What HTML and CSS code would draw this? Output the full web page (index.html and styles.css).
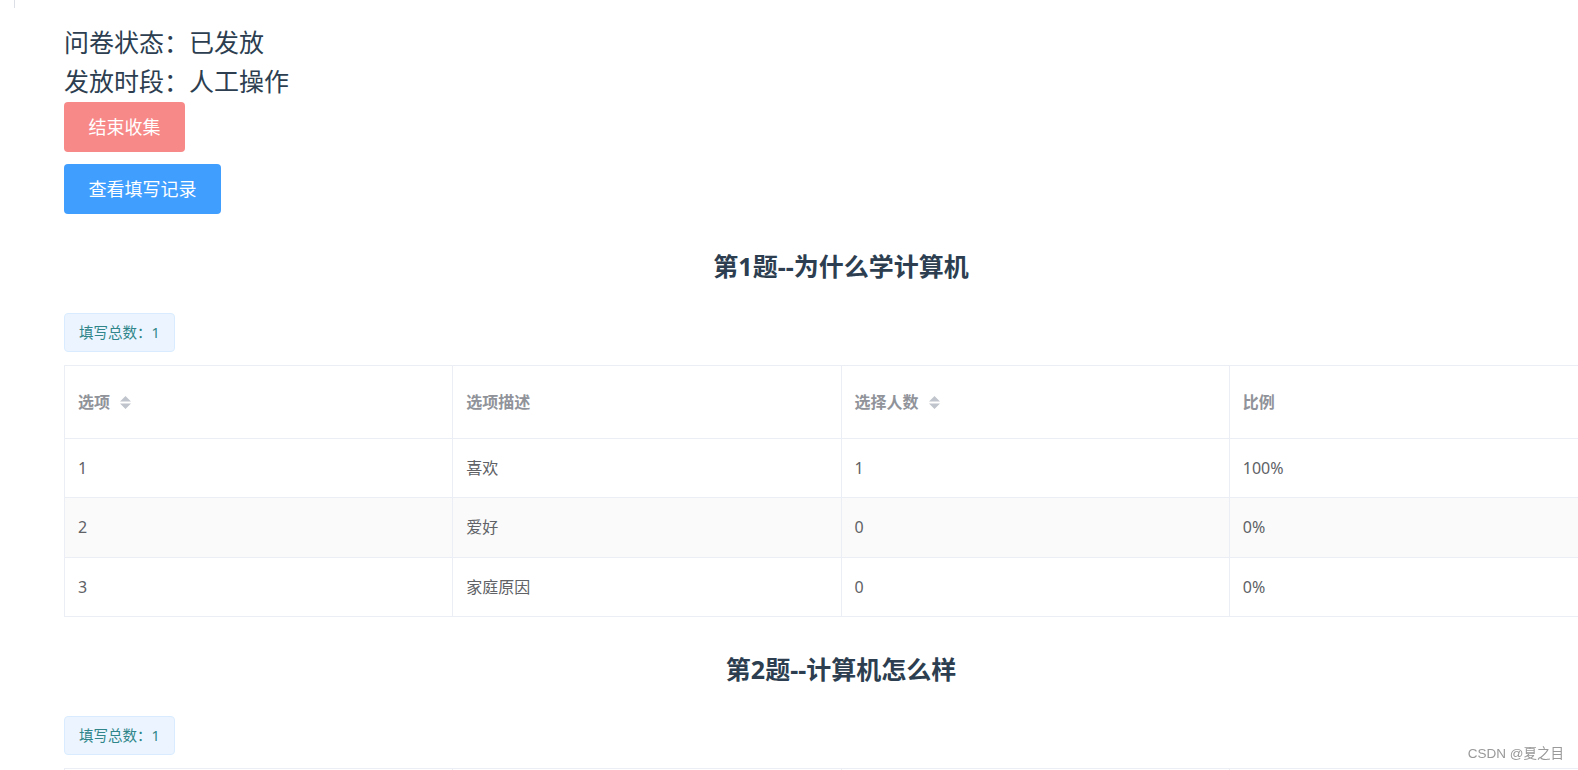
FILE: index.html
```html
<!DOCTYPE html>
<html lang="zh-CN">
<head>
<meta charset="utf-8">
<title>问卷统计</title>
<link rel="stylesheet" href="styles.css">
</head>
<body>
<div class="edge"></div>
<main class="page">
  <div class="info">问卷状态：已发放</div>
  <div class="info">发放时段：人工操作</div>
  <div class="btn-row"><button class="btn btn-danger">结束收集</button></div>
  <div class="btn-row second"><button class="btn btn-primary">查看填写记录</button></div>

  <section class="question">
    <h3 class="q-title">第1题--为什么学计算机</h3>
    <div class="tag">填写总数：1</div>
    <table class="grid">
      <thead>
        <tr>
          <th>选项<span class="caret"><svg width="11" height="13" viewBox="0 0 11 13"><path d="M0 5.5 L5.5 0 L11 5.5 Z M0 7.5 L11 7.5 L5.5 13 Z" fill="#c0c4cc"/></svg></span></th>
          <th>选项描述</th>
          <th>选择人数<span class="caret"><svg width="11" height="13" viewBox="0 0 11 13"><path d="M0 5.5 L5.5 0 L11 5.5 Z M0 7.5 L11 7.5 L5.5 13 Z" fill="#c0c4cc"/></svg></span></th>
          <th>比例</th>
        </tr>
      </thead>
      <tbody>
        <tr><td>1</td><td>喜欢</td><td>1</td><td>100%</td></tr>
        <tr class="striped"><td>2</td><td>爱好</td><td>0</td><td>0%</td></tr>
        <tr><td>3</td><td>家庭原因</td><td>0</td><td>0%</td></tr>
      </tbody>
    </table>
  </section>

  <section class="question">
    <h3 class="q-title">第2题--计算机怎么样</h3>
    <div class="tag">填写总数：1</div>
    <table class="grid">
      <thead>
        <tr>
          <th>选项<span class="caret"><svg width="11" height="13" viewBox="0 0 11 13"><path d="M0 5.5 L5.5 0 L11 5.5 Z M0 7.5 L11 7.5 L5.5 13 Z" fill="#c0c4cc"/></svg></span></th>
          <th>选项描述</th>
          <th>选择人数<span class="caret"><svg width="11" height="13" viewBox="0 0 11 13"><path d="M0 5.5 L5.5 0 L11 5.5 Z M0 7.5 L11 7.5 L5.5 13 Z" fill="#c0c4cc"/></svg></span></th>
          <th>比例</th>
        </tr>
      </thead>
      <tbody>
        <tr><td>1</td><td>很好</td><td>1</td><td>100%</td></tr>
      </tbody>
    </table>
  </section>
</main>
<div class="watermark">CSDN @夏之目</div>
</body>
</html>
```

FILE: styles.css
```css
html, body {
  margin: 0;
  padding: 0;
  overflow: hidden;
  background: #ffffff;
}
body {
  font-family: "Noto Sans", "Noto Sans CJK SC", sans-serif;
  color: #2c3e50;
  width: 1578px;
  height: 770px;
}
.edge {
  width: 1px;
  height: 8px;
  margin-left: 14px;
  background: #dcdfe6;
}
.page {
  margin-left: 64px;
  width: 1554px;
  padding-top: 15px;
}
.info {
  font-size: 25px;
  line-height: 39px;
  height: 39px;
  color: #2c3e50;
  white-space: nowrap;
}
.btn-row {
  margin-top: 1px;
  display: flex;
}
.btn-row.second {
  margin-top: 12px;
}
.btn {
  font-family: "Noto Sans", "Noto Sans CJK SC", sans-serif;
  height: 50px;
  padding: 0 24.5px;
  font-size: 18px;
  line-height: 50px;
  color: #ffffff;
  border: none;
  border-radius: 4px;
  cursor: pointer;
}
.btn-danger { background: #f78989; }
.btn-primary { background: #409eff; }

.question {
  display: flex;
  flex-direction: column;
  align-items: flex-start;
}
.q-title {
  align-self: stretch;
  margin: 37px 0 0;
  text-align: center;
  font-size: 25px;
  line-height: 30px;
  height: 30px;
  font-weight: 700;
  color: #2c3e50;
}
.tag {
  margin-top: 32px;
  height: 39px;
  box-sizing: border-box;
  padding: 0 14px;
  border: 1px solid #d9ecff;
  background: #ecf5ff;
  border-radius: 4px;
  font-size: 14.5px;
  line-height: 37px;
  color: #2f8589;
}
.grid {
  margin-top: 12.5px;
  width: 1554px;
  border-collapse: separate;
  border-spacing: 0;
  border-top: 1px solid #ebeef5;
  border-left: 1px solid #ebeef5;
  table-layout: fixed;
  font-size: 16px;
}
.grid th, .grid td {
  border-right: 1px solid #ebeef5;
  border-bottom: 1px solid #ebeef5;
  padding: 0 0 0 13px;
  text-align: left;
  vertical-align: middle;
}
.grid th {
  height: 72px;
  line-height: 72px;
  color: #909399;
  font-weight: 700;
}
.grid td {
  height: 58.5px;
  line-height: 58.5px;
  color: #606266;
}
.grid tr.striped td {
  background: #fafafa;
}
.caret {
  display: inline-block;
  margin-left: 10px;
  vertical-align: middle;
  line-height: 0;
  position: relative;
  top: -1px;
}
.watermark {
  position: fixed;
  right: 14px;
  bottom: 8px;
  font-size: 13.5px;
  line-height: 16px;
  color: #999999;
  font-family: "Liberation Sans", "Noto Sans CJK SC", sans-serif;
}
```
